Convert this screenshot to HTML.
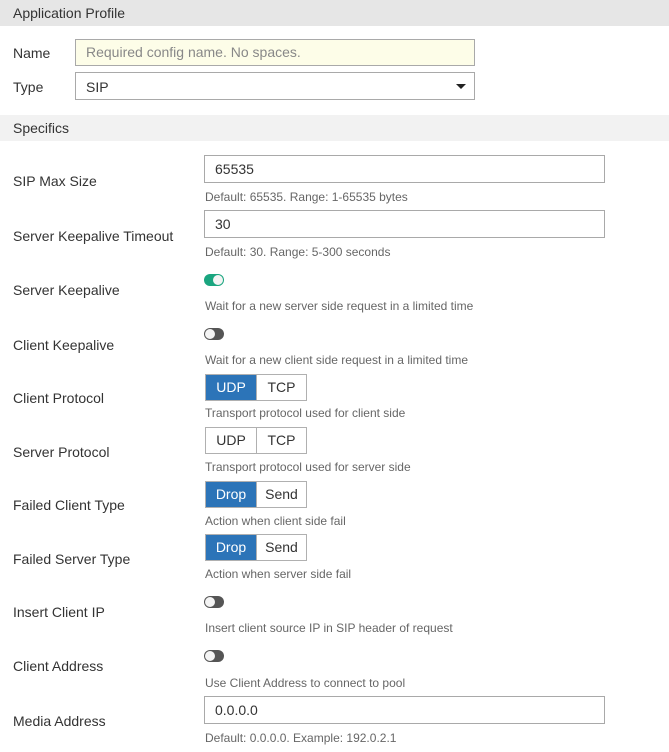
<!DOCTYPE html>
<html><head><style>
*{box-sizing:border-box;margin:0;padding:0}
body{width:669px;height:752px;background:#fff;font-family:"Liberation Sans",sans-serif;color:#333;position:relative;overflow:hidden}
.a{position:absolute;white-space:nowrap;line-height:16px}
.l{left:13px;font-size:14px;color:#333}
.h{left:205px;font-size:12px;color:#666}
.hd{position:absolute;left:0;width:669px;height:26px;font-size:14px;line-height:26px;padding-left:13px}
.in{position:absolute;border:1px solid #a9a9a9;background:#fff;font-size:14px;line-height:27px;padding-left:10px;color:#333}
.tg{position:absolute;left:204px;width:20px;height:12px;border-radius:6px;background:#555}
.tg:after{content:"";position:absolute;top:1px;left:1px;width:10px;height:10px;border-radius:50%;background:#f4f4f4}
.tg.on{background:#1aa57f}.tg.on:after{left:9px}
.bg{position:absolute;left:205px;height:27px;border:1px solid #b0b0b0;display:flex;font-size:14px}
.bg span{display:block;width:50px;text-align:center;line-height:25px;color:#333}
.bg span+span{border-left:1px solid #b0b0b0}
.bg .s{background:#2c74b8;color:#fff}
</style></head><body>
<div class="hd" style="top:0;background:#e6e6e6">Application Profile</div>
<div class="a l" style="top:45px">Name</div>
<div class="in" style="left:75px;top:39px;width:400px;height:27px;background:#fdfde8;color:#888;line-height:25px">Required config name. No spaces.</div>
<div class="a l" style="top:79px">Type</div>
<div class="in" style="left:75px;top:72px;width:400px;height:28px;line-height:28px">SIP<span style="position:absolute;right:8px;top:11px;border-left:5px solid transparent;border-right:5px solid transparent;border-top:5px solid #222"></span></div>
<div class="hd" style="top:115px;background:#f2f2f2">Specifics</div>

<div class="a l" style="top:173px">SIP Max Size</div>
<div class="in" style="left:204px;top:155px;width:401px;height:28px">65535</div>
<div class="a h" style="top:189px">Default: 65535. Range: 1-65535 bytes</div>

<div class="a l" style="top:228px">Server Keepalive Timeout</div>
<div class="in" style="left:204px;top:210px;width:401px;height:28px">30</div>
<div class="a h" style="top:244px">Default: 30. Range: 5-300 seconds</div>

<div class="a l" style="top:282px">Server Keepalive</div>
<div class="tg on" style="top:274px"></div>
<div class="a h" style="top:298px">Wait for a new server side request in a limited time</div>

<div class="a l" style="top:337px">Client Keepalive</div>
<div class="tg" style="top:328px"></div>
<div class="a h" style="top:352px">Wait for a new client side request in a limited time</div>

<div class="a l" style="top:390px">Client Protocol</div>
<div class="bg" style="top:374px"><span class="s">UDP</span><span>TCP</span></div>
<div class="a h" style="top:405px">Transport protocol used for client side</div>

<div class="a l" style="top:444px">Server Protocol</div>
<div class="bg" style="top:427px"><span>UDP</span><span>TCP</span></div>
<div class="a h" style="top:459px">Transport protocol used for server side</div>

<div class="a l" style="top:497px">Failed Client Type</div>
<div class="bg" style="top:481px"><span class="s">Drop</span><span>Send</span></div>
<div class="a h" style="top:513px">Action when client side fail</div>

<div class="a l" style="top:551px">Failed Server Type</div>
<div class="bg" style="top:534px"><span class="s">Drop</span><span>Send</span></div>
<div class="a h" style="top:566px">Action when server side fail</div>

<div class="a l" style="top:604px">Insert Client IP</div>
<div class="tg" style="top:596px"></div>
<div class="a h" style="top:620px">Insert client source IP in SIP header of request</div>

<div class="a l" style="top:658px">Client Address</div>
<div class="tg" style="top:650px"></div>
<div class="a h" style="top:675px">Use Client Address to connect to pool</div>

<div class="a l" style="top:713px">Media Address</div>
<div class="in" style="left:204px;top:696px;width:401px;height:28px">0.0.0.0</div>
<div class="a h" style="top:730px">Default: 0.0.0.0. Example: 192.0.2.1</div>
</body></html>
